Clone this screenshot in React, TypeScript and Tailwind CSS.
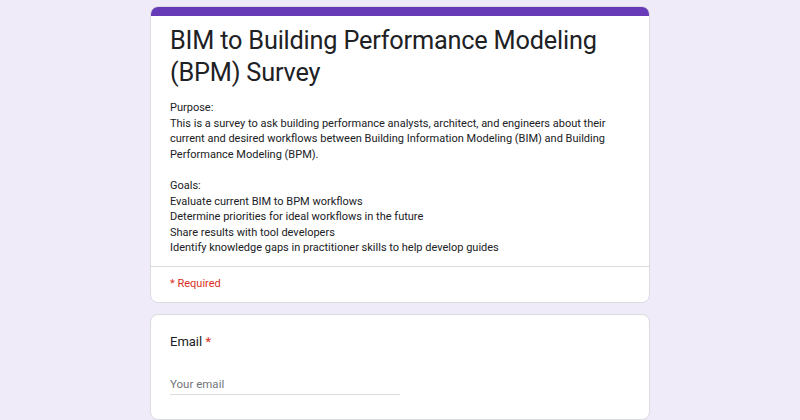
import React from 'react';

const goals = [
  'Evaluate current BIM to BPM workflows',
  'Determine priorities for ideal workflows in the future',
  'Share results with tool developers',
  'Identify knowledge gaps in practitioner skills to help develop guides',
];

export default function App() {
  return (
    <div
      className="min-h-[420px] w-full bg-[#f0ebf8] pt-[6px] text-[#202124]"
      style={{ fontFamily: 'Roboto, "Noto Sans", sans-serif' }}
    >
      <div className="mx-auto flex w-[500px] flex-col gap-[11px]">
        {/* header card */}
        <div className="overflow-hidden rounded-lg border border-[#dadce0] bg-white">
          <div className="h-[9px] bg-[#673ab7]" />
          <div className="px-[19px] pt-[9px] pb-[10px]">
            <h1 className="text-[25.3px] leading-[32px] font-normal tracking-[-0.2px]">
              BIM to Building Performance Modeling (BPM) Survey
            </h1>
            <div className="mt-[11px] text-[11px] leading-[15.6px] text-[#202124]">
              <p>Purpose:</p>
              <p>
                This is a survey to ask building performance analysts, architect, and engineers about their
                current and desired workflows between Building Information Modeling (BIM) and Building
                Performance Modeling (BPM).
              </p>
              <p className="mt-[15.6px]">Goals:</p>
              {goals.map((g) => (
                <p key={g}>{g}</p>
              ))}
            </div>
          </div>
          <div className="border-t border-[#dadce0] px-[19px] pt-[9px] pb-[10px] text-[11px] leading-4 text-[#d93025]">
            * Required
          </div>
        </div>

        {/* email card */}
        <div className="rounded-lg border border-[#dadce0] bg-white px-[19px] pt-[17px] pb-[24px]">
          <div className="text-[13px] leading-5">
            Email <span className="text-[#d93025]">*</span>
          </div>
          <div className="mt-[24px] w-[230px] border-b border-[#dadce0] pb-[2px] text-[11.5px] leading-4 text-[#70757a]">
            Your email
          </div>
        </div>
      </div>
    </div>
  );
}
